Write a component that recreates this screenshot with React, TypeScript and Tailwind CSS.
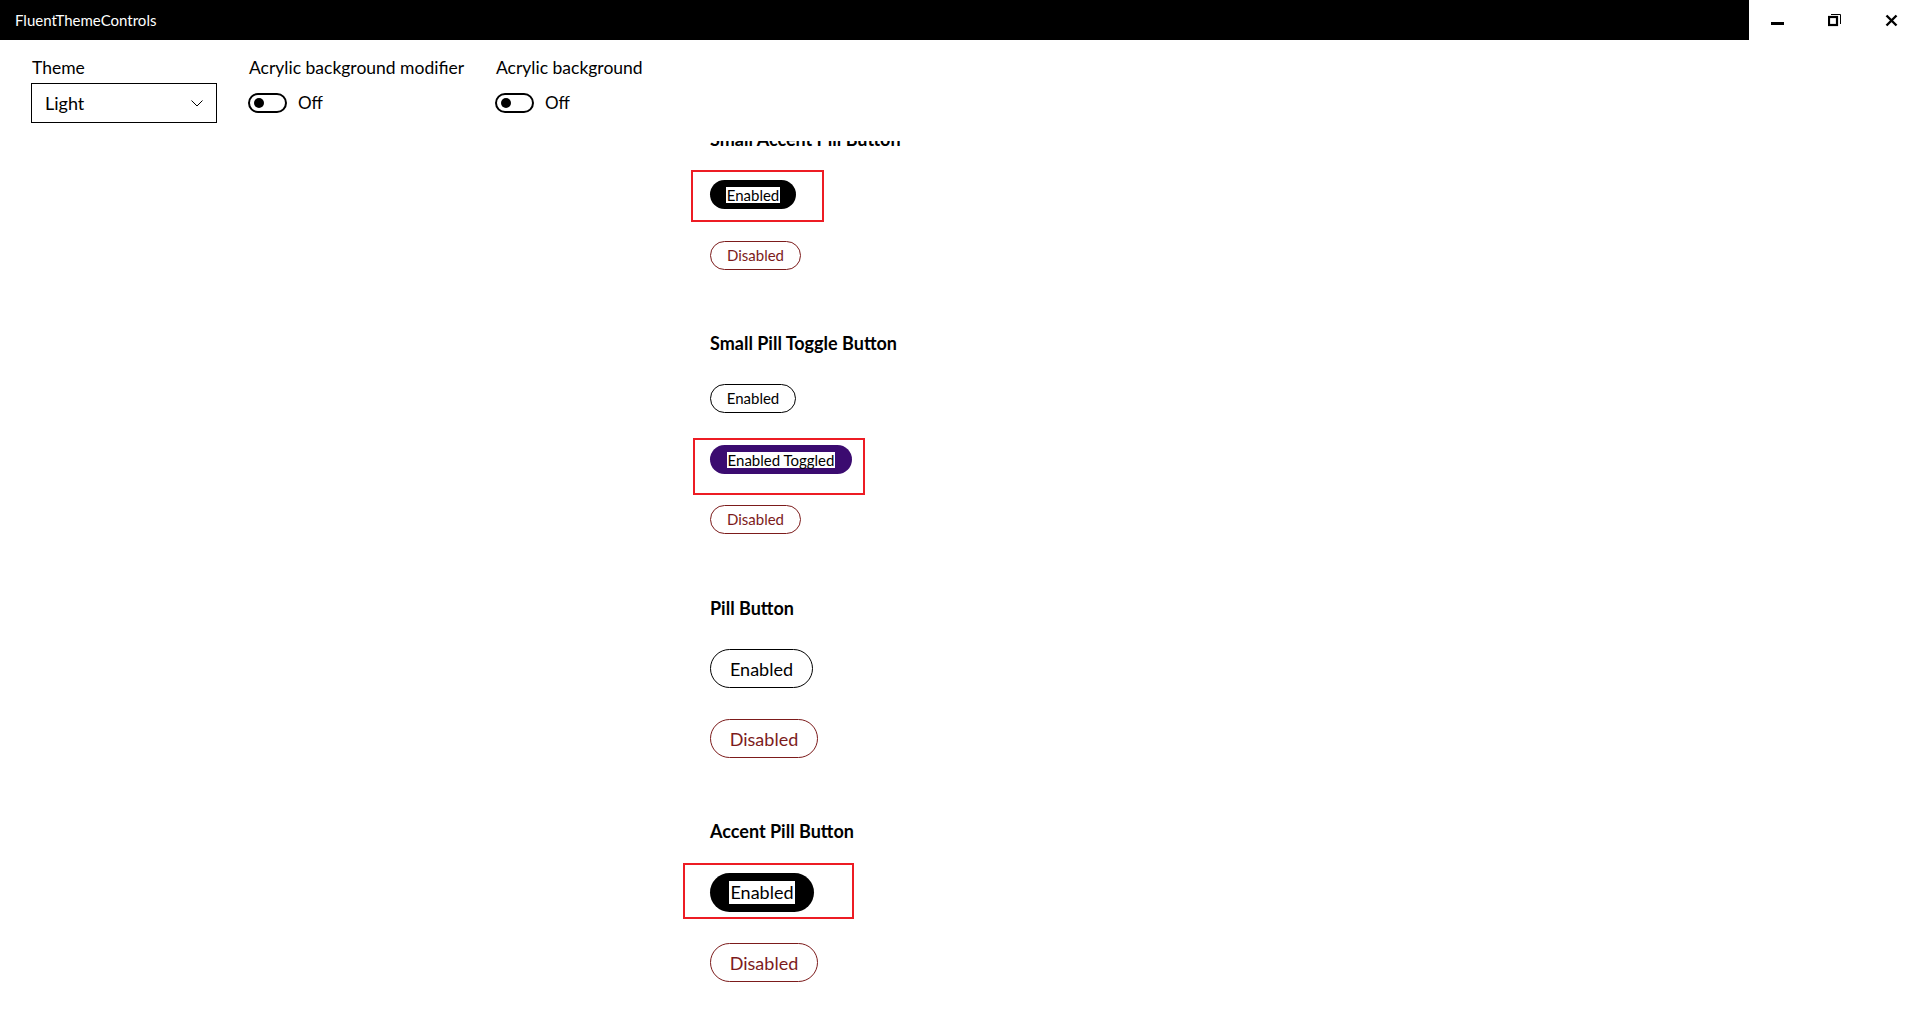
import React from 'react'

const Pill = ({ label, w, big, kind }: { label: string; w: string; big?: boolean; kind: 'outline' | 'accent' | 'toggled' | 'disabled' }) => {
    const size = big ? 'h-[39px] text-[18px]' : 'h-[29px] text-[15px]'
    let look = 'border border-black text-black bg-white'
    if (kind === 'disabled') look = 'border border-[#7c1b1b] text-[#7c1b1b] bg-white'
    if (kind === 'accent') look = 'bg-black text-black'
    if (kind === 'toggled') look = 'bg-[#3b0b70] text-black'
    const filled = kind === 'accent' || kind === 'toggled'
    return (
        <div className={`${w} ${size} ${look} rounded-full flex items-center justify-center`}>
            {filled ? (
                <span className={`bg-white px-[1px] ${big ? 'leading-[23px]' : 'leading-[16px]'}`}>{label}</span>
            ) : (
                <span className='leading-none'>{label}</span>
            )}
        </div>
    )
}

const Focus = ({ cls }: { cls: string }) => (
    <div className={`absolute border-2 border-[#ed1c24] ${cls}`}></div>
)

const Toggle = () => (
    <div className='flex items-center h-[40px]'>
        <div className='w-[39px] h-[20px] rounded-full border-2 border-black flex items-center pl-[4px]'>
            <div className='w-[10px] h-[10px] rounded-full bg-black'></div>
        </div>
        <span className='ml-[11px] text-[17px] text-black'>Off</span>
    </div>
)

const App = () => {
    return (
        <div className='w-[1920px] h-[1024px] bg-white overflow-hidden flex flex-col font-[family-name:Lato,sans-serif]'>
            {/* title bar */}
            <div className='h-[40px] flex shrink-0'>
                <div className='w-[1749px] bg-black flex items-center pl-[15px]'>
                    <span className='text-white text-[15px]'>FluentThemeControls</span>
                </div>
                <div className='flex-1 flex bg-white'>
                    <div className='w-[57px] flex items-center justify-center'>
                        <svg width='13' height='13' viewBox='0 0 13 13'>
                            <rect x='0' y='8' width='13' height='3' fill='black' />
                        </svg>
                    </div>
                    <div className='w-[57px] flex items-center justify-center'>
                        <svg width='13' height='13' viewBox='0 0 13 13'>
                            <path d='M3 0.5 H12.5 V10' fill='none' stroke='black' strokeWidth='1' />
                            <rect x='1' y='3' width='8' height='8' fill='none' stroke='black' strokeWidth='2.2' />
                        </svg>
                    </div>
                    <div className='w-[57px] flex items-center justify-center'>
                        <svg width='13' height='13' viewBox='0 0 13 13'>
                            <path d='M1.5 1.5 L11.5 11.5 M11.5 1.5 L1.5 11.5' stroke='black' strokeWidth='2.4' />
                        </svg>
                    </div>
                </div>
            </div>

            {/* settings row */}
            <div className='h-[101px] shrink-0 flex pt-[16px] pl-[31px] text-black'>
                <div className='w-[186px] flex flex-col'>
                    <span className='text-[17.5px] leading-[23px] pl-[1px]'>Theme</span>
                    <div className='mt-[4px] h-[40px] border border-black flex items-center justify-between pl-[13px] pr-[13px]'>
                        <span className='text-[18px]'>Light</span>
                        <svg width='12' height='7' viewBox='0 0 12 7'>
                            <path d='M0.5 0.5 L6 6 L11.5 0.5' fill='none' stroke='black' strokeWidth='1' />
                        </svg>
                    </div>
                </div>
                <div className='ml-[31px] w-[216px] flex flex-col'>
                    <span className='text-[17.5px] leading-[23px] pl-[1px] whitespace-nowrap'>Acrylic background modifier</span>
                    <div className='mt-[4px]'>
                        <Toggle />
                    </div>
                </div>
                <div className='ml-[31px] flex flex-col'>
                    <span className='text-[17.5px] leading-[23px] pl-[1px]'>Acrylic background</span>
                    <div className='mt-[4px]'>
                        <Toggle />
                    </div>
                </div>
            </div>

            {/* scrolled content */}
            <div className='flex-1 overflow-hidden'>
                <div className='pl-[710px] mt-[-13px] flex flex-col items-start text-black'>
                    <h3 className='h-[22px] text-[18px] leading-[22px] font-bold'>Small Accent Pill Button</h3>
                    <div className='relative mt-[30px]'>
                        <Focus cls='left-[-19px] top-[-10px] w-[133px] h-[52px]' />
                        <Pill label='Enabled' w='w-[86px]' kind='accent' />
                    </div>
                    <div className='mt-[32px]'>
                        <Pill label='Disabled' w='w-[91px]' kind='disabled' />
                    </div>

                    <h3 className='mt-[62px] h-[22px] text-[18px] leading-[22px] font-bold'>Small Pill Toggle Button</h3>
                    <div className='mt-[30px]'>
                        <Pill label='Enabled' w='w-[86px]' kind='outline' />
                    </div>
                    <div className='relative mt-[32px]'>
                        <Focus cls='left-[-17px] top-[-7px] w-[172px] h-[57px]' />
                        <Pill label='Enabled Toggled' w='w-[142px]' kind='toggled' />
                    </div>
                    <div className='mt-[31px]'>
                        <Pill label='Disabled' w='w-[91px]' kind='disabled' />
                    </div>

                    <h3 className='mt-[63px] h-[22px] text-[18px] leading-[22px] font-bold'>Pill Button</h3>
                    <div className='mt-[30px]'>
                        <Pill label='Enabled' w='w-[103px]' big kind='outline' />
                    </div>
                    <div className='mt-[31px]'>
                        <Pill label='Disabled' w='w-[108px]' big kind='disabled' />
                    </div>

                    <h3 className='mt-[62px] h-[22px] text-[18px] leading-[22px] font-bold'>Accent Pill Button</h3>
                    <div className='relative mt-[31px]'>
                        <Focus cls='left-[-27px] top-[-10px] w-[171px] h-[56px]' />
                        <Pill label='Enabled' w='w-[104px]' big kind='accent' />
                    </div>
                    <div className='mt-[31px]'>
                        <Pill label='Disabled' w='w-[108px]' big kind='disabled' />
                    </div>
                </div>
            </div>
        </div>
    )
}

export default App
